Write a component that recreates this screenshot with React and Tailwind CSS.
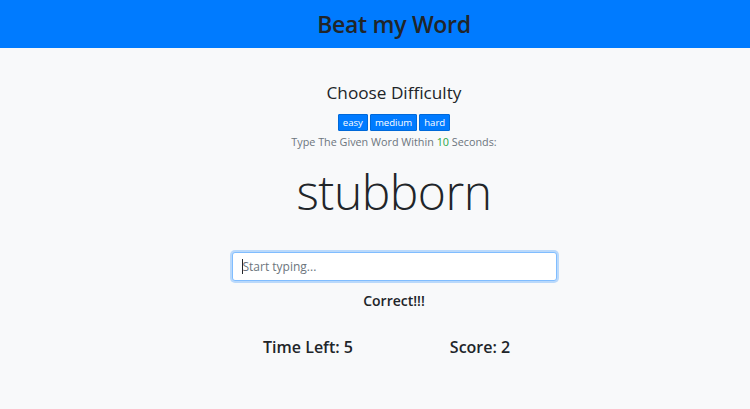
export default function App() {
  return (
    <div className="min-h-[409px] bg-[#f8f9fa] text-[#212529]" style={{ fontFamily: '"Open Sans", "Noto Sans", sans-serif' }}>
      <header className="h-[48px] bg-[#007bff] flex items-center justify-center pl-[38px]">
        <h1 className="text-[23px] font-semibold leading-none text-[#212529] tracking-[-0.3px]">Beat my Word</h1>
      </header>
      <main className="flex flex-col items-center pl-[38px]">
        <h2 className="mt-[34px] text-[17.2px] leading-[22px] font-normal">Choose Difficulty</h2>
        <div className="mt-[10px] flex gap-[2px]">
          <button className="h-[17px] px-[4px] text-[9.6px] leading-none text-white bg-[#007bff] border border-[#0069d9] rounded-[1px]">easy</button>
          <button className="h-[17px] px-[4px] text-[9.6px] leading-none text-white bg-[#007bff] border border-[#0069d9] rounded-[1px]">medium</button>
          <button className="h-[17px] px-[4px] text-[9.6px] leading-none text-white bg-[#007bff] border border-[#0069d9] rounded-[1px]">hard</button>
        </div>
        <p className="mt-[3px] text-[10.8px] leading-[16px] text-[#6c757d]">
          Type The Given Word Within <span className="text-[#28a745]">10</span> Seconds:
        </p>
        <div className="mt-[10px] text-[48px] leading-[64px] font-light tracking-[-0.5px]">stubborn</div>
        <div className="mt-[28px] w-[325px] h-[29px] bg-white border border-[#80bdff] rounded-[3px] shadow-[0_0_0_2px_rgba(0,123,255,0.25)] flex items-center px-[9px]">
          <span className="w-px h-[15px] bg-[#212529]"></span>
          <span className="text-[12px] text-[#6c757d]">Start typing...</span>
        </div>
        <div className="mt-[11px] text-[14px] font-semibold leading-[18px]">Correct!!!</div>
        <div className="mt-[25px] flex">
          <div className="w-[172px] text-center text-[16px] font-semibold">Time Left: 5</div>
          <div className="w-[172px] text-center text-[16px] font-semibold">Score: 2</div>
        </div>
      </main>
    </div>
  );
}
